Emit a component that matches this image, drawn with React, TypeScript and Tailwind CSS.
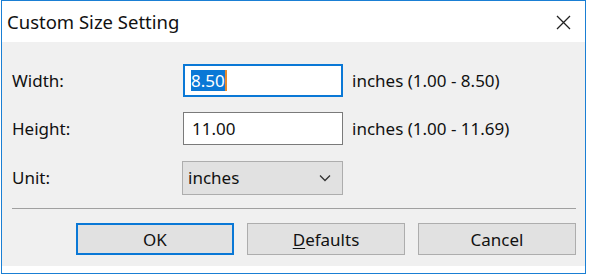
export default function App() {
  return (
    <div className="w-[590px] h-[275px] bg-white pl-[1px] font-['Noto_Sans',sans-serif] text-[#111]">
      <div className="w-[585px] h-[274px] border border-[#1a7fd4] bg-white flex flex-col">
        {/* title bar */}
        <div className="h-[41px] bg-white flex items-center justify-between pl-[5px] pr-[14px] pt-[2px]">
          <span className="text-[18.5px] leading-none">Custom Size Setting</span>
          <svg width="15" height="15" viewBox="0 0 15 15" className="text-[#222]">
            <path d="M1 1L14 14M14 1L1 14" stroke="currentColor" strokeWidth="1.3" fill="none" />
          </svg>
        </div>

        <div className="bg-[#f0f0f0] h-[224px] flex flex-col pl-[10px] pr-[9px] pt-[22px]">
          <div className="flex items-center h-[33px]">
            <span className="w-[171px] text-[17px]">Width:</span>
            <div className="w-[160px] h-[33px] bg-white border-2 border-[#0a78d6] flex items-center pl-[6px]">
              <span className="bg-[#0a78d6] text-white text-[17px] leading-[21px] h-[21px]">8.50</span>
              <span className="w-[2px] h-[21px] bg-[#e8892a]" />
            </div>
            <span className="ml-[9px] text-[17px]">inches (1.00 - 8.50)</span>
          </div>

          <div className="flex items-center h-[33px] mt-[15px]">
            <span className="w-[171px] text-[17px]">Height:</span>
            <div className="w-[160px] h-[33px] bg-white border border-[#7a7a7a] flex items-center pl-[8px]">
              <span className="text-[17px]">11.00</span>
            </div>
            <span className="ml-[9px] text-[17px]">inches (1.00 - 11.69)</span>
          </div>

          <div className="flex items-center h-[34px] mt-[16px]">
            <span className="w-[170px] text-[17px]">Unit:</span>
            <div className="w-[161px] h-[34px] bg-[#e1e1e1] border border-[#adadad] flex items-center justify-between pl-[5px] pr-[11px]">
              <span className="text-[17px]">inches</span>
              <svg width="12" height="8" viewBox="0 0 12 8">
                <path d="M1 1.5L6 6.5L11 1.5" stroke="#333" strokeWidth="1.3" fill="none" />
              </svg>
            </div>
          </div>

          <div className="h-px bg-[#a0a0a0] mt-[13px]" />

          <div className="flex justify-end gap-[13px] mt-[14px]">
            <button className="w-[158px] h-[32px] bg-[#e1e1e1] border-2 border-[#0a78d6] text-[17px] leading-none">
              OK
            </button>
            <button className="w-[158px] h-[32px] bg-[#e1e1e1] border border-[#adadad] text-[17px] leading-none">
              <span className="underline underline-offset-2">D</span>efaults
            </button>
            <button className="w-[158px] h-[32px] bg-[#e1e1e1] border border-[#adadad] text-[17px] leading-none">
              Cancel
            </button>
          </div>
        </div>
      </div>
    </div>
  );
}
